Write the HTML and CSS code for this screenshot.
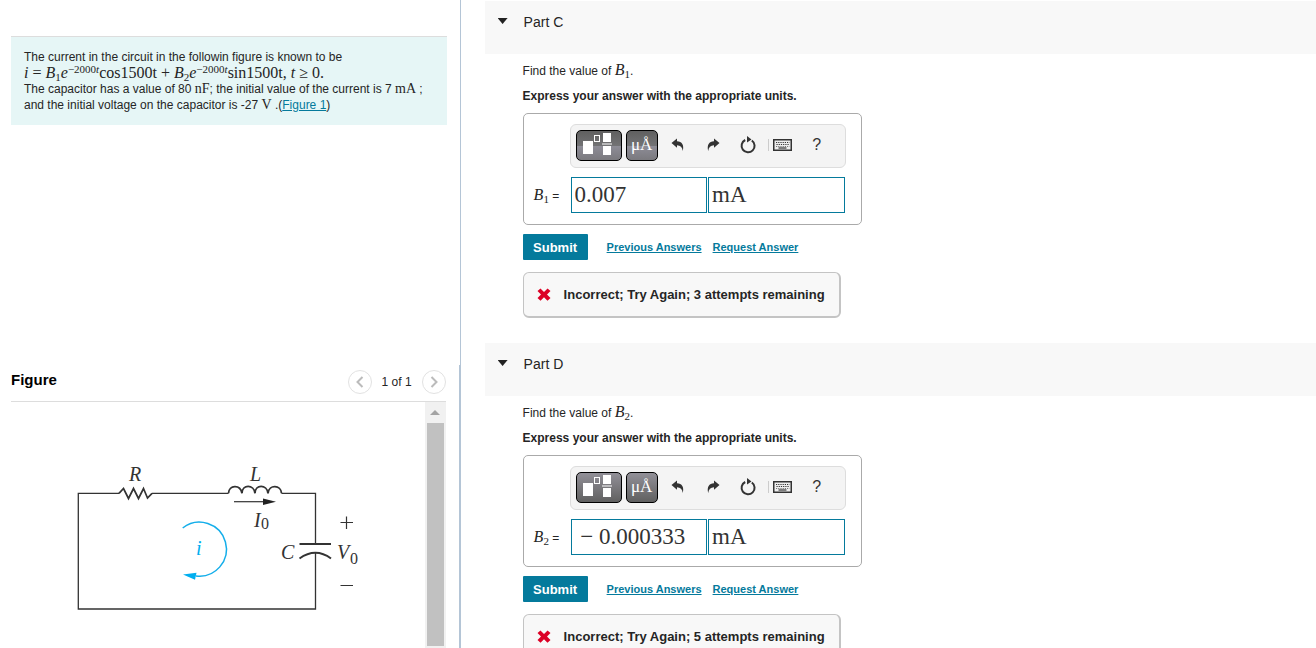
FILE: index.html
```
<!DOCTYPE html>
<html lang="en">
<head>
<meta charset="utf-8">
<title>Circuit response</title>
<link rel="stylesheet" href="styles.css">
</head>
<body>
<svg class="defs" aria-hidden="true">
  <symbol id="undo" viewBox="0 0 14 14"><path d="M0.500 5 L6 0.500 V3.300 C11 3.500 13.300 7 11.800 13 C11.300 9.300 9.500 7.300 6 7.200 V9.800 Z"/></symbol>
  <symbol id="reset" viewBox="0 0 18 18"><path d="M6.200 4 A6.500 6.500 0 1 0 12.800 4.500" fill="none" stroke="#333" stroke-width="2"/><path d="M8 0 L12.500 3.400 L8 6.500 Z"/></symbol>
  <symbol id="keys" viewBox="0 0 19 12"><rect x="0.750" y="0.750" width="17.500" height="10.500" fill="#eee" stroke="#333" stroke-width="1.500"/><path d="M3 3.500H16.500M3.500 5.500H16.500" stroke="#333" stroke-dasharray="1.200 1"/><path d="M3 7.500H16.500" stroke="#777" stroke-dasharray="1.200 1"/><path d="M5.500 9H13.500" stroke="#333" stroke-width="1.200"/></symbol>
  <symbol id="template" viewBox="0 0 30 26"><path fill="#fff" d="M0 9H10V22H0ZM20 1H28V10H20ZM20 14H28V23H20ZM19 11.500H29V12.500H19Z"/><rect x="11.500" y="3.500" width="5" height="6" fill="none" stroke="#fff"/></symbol>
  <symbol id="cross" viewBox="0 0 14 13"><path fill="#dc0025" d="M3.500 0.500 L7 3.900 L10.500 0.500 L13.500 3 L10 6.500 L13.500 10 L10.500 12.700 L7 9.200 L3.500 12.700 L0.500 10 L4 6.500 L0.500 3 Z"/></symbol>
</svg>
<main class="page">
  <aside class="side">
    <section class="problem">
      <p>The current in the circuit in the followin figure is known to be</p>
      <p class="equation"><i>i</i> = <i>B</i><sub>1</sub><i>e</i><sup>−2000<i>t</i></sup>cos1500t + <i>B</i><sub>2</sub><i>e</i><sup>−2000<i>t</i></sup>sin1500t, <i>t</i> ≥ 0.</p>
      <p>The capacitor has a value of 80 <span class="unit">nF</span>; the initial value of the current is 7 <span class="unit">mA</span> ; and the initial voltage on the capacitor is -27 <span class="unit">V</span> .(<a href="#figure">Figure 1</a>)</p>
    </section>
    <section class="figure" id="figure">
      <header class="figure-head">
        <h2>Figure</h2>
        <nav class="pager">
          <button type="button" aria-label="Previous figure"><svg viewBox="0 0 8 12"><path d="M6.500 1 L1.500 6 L6.500 11"/></svg></button>
          <span>1 of 1</span>
          <button type="button" aria-label="Next figure"><svg viewBox="0 0 8 12"><path d="M1.500 1 L6.500 6 L1.500 11"/></svg></button>
        </nav>
      </header>
      <div class="viewport">
        <svg class="circuit" width="300" height="170" viewBox="70 455 300 170">
          <g fill="none" stroke="#333">
            <path stroke-width="1.300" d="M119 493.300H78.300V609H315.500V552.500M315.500 543V493.300H281.500M152 493.300H228.500"/>
            <path stroke-width="1.700" d="M119 493.300 L123.500 488.500 L128.500 498.500 L133.500 488.500 L138.500 498.500 L143.500 488.500 L147.500 498 L152 493.300"/>
            <path stroke-width="1.800" d="M228.500 493.300 C229 485 240 484 242 493.300 C242 484 254 484 255 493.300 C255 484 267 484 268 493.300 C269 484 281 485 281.500 493.300"/>
            <path stroke-width="1.200" d="M234 501.700H264"/>
            <path stroke-width="2" d="M299.500 544H331M299.500 558.500Q315.500 547 331 558.500"/>
            <path stroke-width="1.200" d="M340.500 522.500H353M346.500 516.500V529M340.500 585.500H353"/>
          </g>
          <path fill="#222" d="M263 498.500L276 501.700L263 505Z"/>
          <path fill="none" stroke="#14aeea" stroke-width="1.500" d="M182.700 528A27 27 0 1 1 196 576"/>
          <path fill="#00aeef" d="M183 574.500L196.500 572.800L195 579.800Z"/>
          <g class="labels">
            <text x="129" y="481">R</text><text x="250" y="481">L</text>
            <text x="254" y="527">I</text><text class="index" x="261" y="529">0</text>
            <text x="281" y="559">C</text><text x="337" y="559">V</text><text class="index" x="350" y="564">0</text>
            <text class="loop" x="196" y="555">i</text>
          </g>
        </svg>
        <div class="scrollbar"><span class="arrow"></span><span class="thumb"></span></div>
      </div>
    </section>
  </aside>
  <div class="parts">
    <section class="part">
      <header class="part-head"><button type="button" aria-label="Collapse Part C"></button><h2>Part C</h2></header>
      <div class="part-body">
        <p class="ask">Find the value of <span class="math"><i>B</i><sub>1</sub></span>.</p>
        <p class="hint">Express your answer with the appropriate units.</p>
        <div class="answer">
          <div class="toolbar split">
            <button class="dark wide" type="button" aria-label="Templates"><svg><use href="#template"/></svg></button>
            <button class="dark" type="button">μÅ</button>
            <button class="tool" type="button" aria-label="Undo"><svg class="curve"><use href="#undo"/></svg></button>
            <button class="tool" type="button" aria-label="Redo"><svg class="curve flip"><use href="#undo"/></svg></button>
            <button class="tool" type="button" aria-label="Reset"><svg class="turn"><use href="#reset"/></svg></button>
            <button class="tool keyboard" type="button" aria-label="Keyboard shortcuts"><svg><use href="#keys"/></svg></button>
            <button class="tool help" type="button">?</button>
          </div>
          <label for="b1"><span class="math"><i>B</i><sub>1</sub></span> =</label>
          <div class="fields"><input id="b1" type="text" value="0.007"><input type="text" value="mA" aria-label="Units of B1"></div>
        </div>
        <div class="actions"><button class="submit" type="button">Submit</button><a href="#previous">Previous Answers</a><a href="#request">Request Answer</a></div>
        <div class="feedback"><svg><use href="#cross"/></svg>Incorrect; Try Again; 3 attempts remaining</div>
      </div>
    </section>
    <section class="part">
      <header class="part-head"><button type="button" aria-label="Collapse Part D"></button><h2>Part D</h2></header>
      <div class="part-body">
        <p class="ask">Find the value of <span class="math"><i>B</i><sub>2</sub></span>.</p>
        <p class="hint">Express your answer with the appropriate units.</p>
        <div class="answer">
          <div class="toolbar">
            <button class="dark wide" type="button" aria-label="Templates"><svg><use href="#template"/></svg></button>
            <button class="dark" type="button">μÅ</button>
            <button class="tool" type="button" aria-label="Undo"><svg class="curve"><use href="#undo"/></svg></button>
            <button class="tool" type="button" aria-label="Redo"><svg class="curve flip"><use href="#undo"/></svg></button>
            <button class="tool" type="button" aria-label="Reset"><svg class="turn"><use href="#reset"/></svg></button>
            <button class="tool keyboard" type="button" aria-label="Keyboard shortcuts"><svg><use href="#keys"/></svg></button>
            <button class="tool help" type="button">?</button>
          </div>
          <label for="b2"><span class="math"><i>B</i><sub>2</sub></span> =</label>
          <div class="fields"><input id="b2" type="text" value=" − 0.000333"><input type="text" value="mA" aria-label="Units of B2"></div>
        </div>
        <div class="actions"><button class="submit" type="button">Submit</button><a href="#previous">Previous Answers</a><a href="#request">Request Answer</a></div>
        <div class="feedback"><svg><use href="#cross"/></svg>Incorrect; Try Again; 5 attempts remaining</div>
      </div>
    </section>
  </div>
</main>
</body>
</html>
```
FILE: styles.css
```
* { box-sizing: border-box; }
body { margin: 0; background: #fff; color: #252525; font: 12px/16px "Liberation Sans", Arial, sans-serif; }
h2, p { margin: 0; }
button { padding: 0; font-family: inherit; }
a { color: #047a9c; }
.defs { display: none; }
.page { display: flex; height: 100vh; overflow: hidden; }

.side { display: flex; flex: 0 0 35%; flex-direction: column; justify-content: space-between; padding: 36px 13px 0 11px; border-right: 1px solid #b4c5d6; }
.problem { padding: 12px 8px 12px 13px; border-top: 1px solid #ddd; background: #e6f6f6; }
.problem p { line-height: 16px; }
.problem .equation { font: 16px/16px "Liberation Serif", serif; }
.equation sub, .equation sup { font-size: 11px; line-height: 0; }
.unit { font: 14px/16px "Liberation Serif", serif; }
sub { vertical-align: -3px; }
sup { vertical-align: 5px; }

.figure { margin-right: -13px; padding-right: 13px; border-right: 1px solid #b4c5d6; }
.figure-head { display: flex; align-items: center; justify-content: space-between; height: 37px; padding-bottom: 2px; border-bottom: 1px solid #ddd; }
.figure-head h2 { color: #000; font-size: 15px; line-height: 20px; padding-bottom: 4px; }
.pager { display: flex; align-items: center; gap: 10px; }
.pager button { display: grid; place-items: center; width: 24px; height: 24px; border: 1px solid #e2e2e2; border-radius: 50%; background: #fff; }
.pager svg { width: 8px; height: 12px; fill: none; stroke: #bbb; stroke-width: 2; }
.viewport { display: flex; justify-content: space-between; height: 246px; }
.circuit { margin: 53px 0 0 59px; }
.labels { fill: #333; font: italic 20px "Liberation Serif", serif; }
.labels .index { font-size: 16px; font-style: normal; }
.labels .loop { fill: #00aeef; }
.scrollbar { display: flex; flex-direction: column; align-items: center; gap: 8px; width: 21px; padding: 8px 2px 2px; background: #f1f1f1; }
.arrow { border: 5px solid transparent; border-top: 0; border-bottom-color: #a3a3a3; }
.thumb { flex: 1; width: 100%; background: #c1c1c1; }

.parts { flex: 1; padding: 1px 0 0 24px; }
.part { height: 342px; }
.part-head { display: flex; align-items: flex-start; gap: 16px; height: 53px; padding: 11px 13px; background: #f8f8f8; }
.part-head button { width: 10px; height: 6px; margin-top: 6px; border: 0; background: #222; clip-path: polygon(0 0, 100% 0, 50% 100%); }
.part-head h2 { font-size: 14px; font-weight: 400; line-height: 20px; }
.part-body { padding: 8px 38px 0; }
.ask { line-height: 18px; }
.math { font: 16px/16px "Liberation Serif", serif; }
.math sub { font-size: 11px; line-height: 0; }
.hint { margin-top: 8px; font-weight: 700; }
.answer { display: grid; grid-template-columns: 36px 276px; align-content: start; align-items: center; gap: 9px 0; width: 339px; height: 112px; padding: 10px; margin-top: 9px; border: 1px solid #aaa; border-radius: 5px; }
.toolbar { display: flex; grid-column: 2; align-items: center; height: 44px; padding: 0 5px 2px; border: 1px solid #ddd; border-radius: 6px; background: #f4f4f4; }
.dark { width: 32px; height: 31px; margin-right: 3px; border: 1px solid #000; border-radius: 5px; background: linear-gradient(#929098, #606060); color: #fff; font: 17px "Liberation Serif", serif; }
.split .dark { background: linear-gradient(#606060, #727274 50%, #8f8e98 50%, #7a797e); }
.dark.wide { width: 46px; margin-right: 4px; }
.dark svg { display: block; width: 30px; height: 26px; margin-left: 6px; }
.tool { display: grid; place-items: center; width: 35px; height: 31px; border: 0; background: none; fill: #333; color: #333; font-size: 16px; }
.curve { width: 14px; height: 14px; }
.flip { transform: scaleX(-1); }
.turn { width: 18px; height: 18px; }
.tool.keyboard { width: 29px; }
.tool.help { width: 44px; }
.keyboard svg { width: 24px; height: 12px; padding-left: 4px; border-left: 1px solid #ccc; }
.answer label { white-space: nowrap; }
.fields { display: grid; grid-template-columns: 1fr 1fr; gap: 1px; padding: 0 1px; }
.fields input { width: 100%; height: 36px; padding: 0 3px; border: 1px solid #047a9c; background: #fff; color: #333; font: 23px "Liberation Serif", serif; }
.actions { display: flex; align-items: center; margin-top: 9px; font-size: 11px; font-weight: 700; }
.actions a + a { margin-left: 11px; }
.submit { width: 65px; height: 26px; margin-right: 19px; border: 0; border-radius: 1px; background: #047a9c; color: #fff; font-size: 13px; font-weight: 700; }
.feedback { display: flex; align-items: center; gap: 13px; width: 318px; height: 46px; padding: 0 13px; margin-top: 12px; border: 1px solid #c4c4c4; border-width: 1px 2px 2px 1px; border-radius: 6px; background: #f8f8f8; font-size: 13px; font-weight: 700; white-space: nowrap; }
.feedback svg { width: 14px; height: 13px; }
```
